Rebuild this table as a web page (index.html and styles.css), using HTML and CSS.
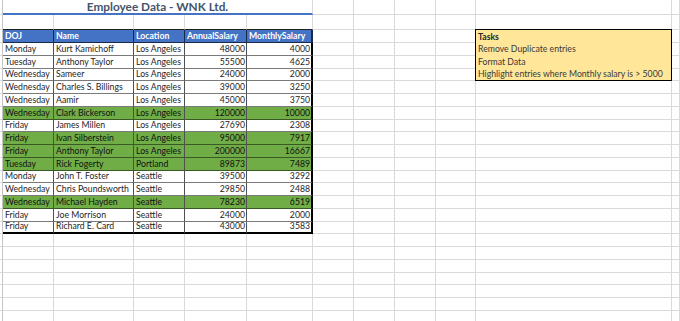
FILE: index.html
```html
<!DOCTYPE html>
<html>
<head>
<meta charset="utf-8">
<link rel="stylesheet" href="styles.css">
</head>
<body>
<div class="sheet">
  <div class="row">
    <div class="c g"></div><div class="c title">Employee Data - WNK Ltd.</div>
    <div class="c"></div><div class="c"></div><div class="c"></div><div class="c"></div><div class="c"></div><div class="c"></div>
  </div>
  <div class="row">
    <div class="c g"></div>
    <div class="c above"></div><div class="c above"></div><div class="c above"></div><div class="c above"></div><div class="c above"></div>
    <div class="c"></div><div class="c"></div><div class="c"></div><div class="c"></div><div class="c"></div><div class="c"></div>
  </div>
  <div class="row head">
    <div class="c g"></div>
    <div class="c t">DOJ</div><div class="c t">Name</div><div class="c t">Location</div><div class="c t">AnnualSalary</div><div class="c t e">MonthlySalary</div>
    <div class="c"></div><div class="c"></div><div class="c"></div><div class="c"></div>
    <div class="c tasks">
      <div class="line b">Tasks</div>
      <div class="line">Remove Duplicate entries</div>
      <div class="line">Format Data</div>
      <div class="line">Highlight entries where Monthly salary is &gt; 5000</div>
    </div>
    <div class="c"></div>
  </div>
  <div class="row">
    <div class="c g"></div>
    <div class="c t">Monday</div><div class="c t">Kurt Kamichoff</div><div class="c t">Los Angeles</div><div class="c t n">48000</div><div class="c t n e">4000</div>
    <div class="c"></div><div class="c"></div><div class="c"></div><div class="c"></div><div class="c"></div>
  </div>
  <div class="row">
    <div class="c g"></div>
    <div class="c t">Tuesday</div><div class="c t">Anthony Taylor</div><div class="c t">Los Angeles</div><div class="c t n">55500</div><div class="c t n e">4625</div>
    <div class="c"></div><div class="c"></div><div class="c"></div><div class="c"></div><div class="c"></div>
  </div>
  <div class="row">
    <div class="c g"></div>
    <div class="c t">Wednesday</div><div class="c t">Sameer</div><div class="c t">Los Angeles</div><div class="c t n">24000</div><div class="c t n e">2000</div>
    <div class="c"></div><div class="c"></div><div class="c"></div><div class="c"></div><div class="c"></div>
  </div>
  <div class="row">
    <div class="c g"></div>
    <div class="c t">Wednesday</div><div class="c t">Charles S. Billings</div><div class="c t">Los Angeles</div><div class="c t n">39000</div><div class="c t n e">3250</div>
    <div class="c"></div><div class="c"></div><div class="c"></div><div class="c"></div><div class="c"></div><div class="c"></div>
  </div>
  <div class="row">
    <div class="c g"></div>
    <div class="c t">Wednesday</div><div class="c t">Aamir</div><div class="c t">Los Angeles</div><div class="c t n">45000</div><div class="c t n e">3750</div>
    <div class="c"></div><div class="c"></div><div class="c"></div><div class="c"></div><div class="c"></div><div class="c"></div>
  </div>
  <div class="row hl">
    <div class="c g"></div>
    <div class="c t">Wednesday</div><div class="c t">Clark Bickerson</div><div class="c t">Los Angeles</div><div class="c t n">120000</div><div class="c t n e">10000</div>
    <div class="c"></div><div class="c"></div><div class="c"></div><div class="c"></div><div class="c"></div><div class="c"></div>
  </div>
  <div class="row">
    <div class="c g"></div>
    <div class="c t">Friday</div><div class="c t">James Millen</div><div class="c t">Los Angeles</div><div class="c t n">27690</div><div class="c t n e">2308</div>
    <div class="c"></div><div class="c"></div><div class="c"></div><div class="c"></div><div class="c"></div><div class="c"></div>
  </div>
  <div class="row hl">
    <div class="c g"></div>
    <div class="c t">Friday</div><div class="c t">Ivan Silberstein</div><div class="c t">Los Angeles</div><div class="c t n">95000</div><div class="c t n e">7917</div>
    <div class="c"></div><div class="c"></div><div class="c"></div><div class="c"></div><div class="c"></div><div class="c"></div>
  </div>
  <div class="row hl">
    <div class="c g"></div>
    <div class="c t">Friday</div><div class="c t">Anthony Taylor</div><div class="c t">Los Angeles</div><div class="c t n">200000</div><div class="c t n e">16667</div>
    <div class="c"></div><div class="c"></div><div class="c"></div><div class="c"></div><div class="c"></div><div class="c"></div>
  </div>
  <div class="row hl">
    <div class="c g"></div>
    <div class="c t">Tuesday</div><div class="c t">Rick Fogerty</div><div class="c t">Portland</div><div class="c t n">89873</div><div class="c t n e">7489</div>
    <div class="c"></div><div class="c"></div><div class="c"></div><div class="c"></div><div class="c"></div><div class="c"></div>
  </div>
  <div class="row">
    <div class="c g"></div>
    <div class="c t">Monday</div><div class="c t">John T. Foster</div><div class="c t">Seattle</div><div class="c t n">39500</div><div class="c t n e">3292</div>
    <div class="c"></div><div class="c"></div><div class="c"></div><div class="c"></div><div class="c"></div><div class="c"></div>
  </div>
  <div class="row">
    <div class="c g"></div>
    <div class="c t">Wednesday</div><div class="c t">Chris Poundsworth</div><div class="c t">Seattle</div><div class="c t n">29850</div><div class="c t n e">2488</div>
    <div class="c"></div><div class="c"></div><div class="c"></div><div class="c"></div><div class="c"></div><div class="c"></div>
  </div>
  <div class="row hl">
    <div class="c g"></div>
    <div class="c t">Wednesday</div><div class="c t">Michael Hayden</div><div class="c t">Seattle</div><div class="c t n">78230</div><div class="c t n e">6519</div>
    <div class="c"></div><div class="c"></div><div class="c"></div><div class="c"></div><div class="c"></div><div class="c"></div>
  </div>
  <div class="row">
    <div class="c g"></div>
    <div class="c t">Friday</div><div class="c t">Joe Morrison</div><div class="c t">Seattle</div><div class="c t n">24000</div><div class="c t n e">2000</div>
    <div class="c"></div><div class="c"></div><div class="c"></div><div class="c"></div><div class="c"></div><div class="c"></div>
  </div>
  <div class="row last">
    <div class="c g"></div>
    <div class="c t">Friday</div><div class="c t">Richard E. Card</div><div class="c t">Seattle</div><div class="c t n">43000</div><div class="c t n e">3583</div>
    <div class="c"></div><div class="c"></div><div class="c"></div><div class="c"></div><div class="c"></div><div class="c"></div>
  </div>
  <div class="row">
    <div class="c g"></div><div class="c"></div><div class="c"></div><div class="c"></div><div class="c"></div><div class="c"></div><div class="c"></div><div class="c"></div><div class="c"></div><div class="c"></div><div class="c"></div><div class="c"></div>
  </div>
  <div class="row">
    <div class="c g"></div><div class="c"></div><div class="c"></div><div class="c"></div><div class="c"></div><div class="c"></div><div class="c"></div><div class="c"></div><div class="c"></div><div class="c"></div><div class="c"></div><div class="c"></div>
  </div>
  <div class="row">
    <div class="c g"></div><div class="c"></div><div class="c"></div><div class="c"></div><div class="c"></div><div class="c"></div><div class="c"></div><div class="c"></div><div class="c"></div><div class="c"></div><div class="c"></div><div class="c"></div>
  </div>
  <div class="row">
    <div class="c g"></div><div class="c"></div><div class="c"></div><div class="c"></div><div class="c"></div><div class="c"></div><div class="c"></div><div class="c"></div><div class="c"></div><div class="c"></div><div class="c"></div><div class="c"></div>
  </div>
  <div class="row">
    <div class="c g"></div><div class="c"></div><div class="c"></div><div class="c"></div><div class="c"></div><div class="c"></div><div class="c"></div><div class="c"></div><div class="c"></div><div class="c"></div><div class="c"></div><div class="c"></div>
  </div>
  <div class="row">
    <div class="c g"></div><div class="c"></div><div class="c"></div><div class="c"></div><div class="c"></div><div class="c"></div><div class="c"></div><div class="c"></div><div class="c"></div><div class="c"></div><div class="c"></div><div class="c"></div>
  </div>
  <div class="row">
    <div class="c g"></div><div class="c"></div><div class="c"></div><div class="c"></div><div class="c"></div><div class="c"></div><div class="c"></div><div class="c"></div><div class="c"></div><div class="c"></div><div class="c"></div><div class="c"></div>
  </div>
</div>
</body>
</html>
```

FILE: styles.css
```css
html, body {
  margin: 0;
  padding: 0;
  background: #ffffff;
  overflow: hidden;
}

.sheet {
  display: grid;
  grid-template-columns: 3px 51px 80px 51px 62px 66px 41px 41px 41px 40px 196px 1fr;
  grid-template-rows: 15px 15px 13px repeat(22, 12.75px);
  width: 680px;
  font-family: "Lato", "Liberation Sans", sans-serif;
  font-size: 8.7px;
  color: #1e1e1e;
}

.row {
  display: contents;
}

.c {
  box-sizing: border-box;
  border-right: 1px solid #dadada;
  border-bottom: 1px solid #dadada;
  display: flex;
  align-items: flex-end;
  padding: 0 2px 1px 2px;
  line-height: 11px;
  white-space: nowrap;
  overflow: hidden;
  min-width: 0;
}

.g {
  border-right-color: #c4c4c4;
  padding: 0;
}

.title {
  grid-column: span 5;
  justify-content: center;
  border-right-color: #dadada;
  border-bottom: 2px solid #4472c4;
  font-size: 11.8px;
  font-weight: 700;
  color: #44546a;
  line-height: 13px;
  padding-bottom: 0;
}

.above {
  border-bottom-color: #202020;
}

.t {
  border-right-color: #505050;
  border-bottom-color: #7a7a7a;
}

.head .t {
  background: #4472c4;
  color: #ffffff;
  font-weight: 700;
  border-right-color: #1a2a4a;
  border-bottom-color: #1a2a4a;
}

.hl .t {
  background: #70ad47;
  color: #111111;
  border-bottom-color: #3a5a25;
}

.n {
  justify-content: flex-end;
  padding-right: 1px;
}

.e {
  border-right: 2px solid #000000;
}

.last .t {
  border-bottom: 2px solid #000000;
}

.tasks {
  grid-row: span 4;
  position: relative;
  z-index: 1;
  display: flex;
  flex-direction: column;
  align-items: stretch;
  justify-content: flex-start;
  padding: 0 2px;
  background: #ffe699;
  border-right: 1px solid #000000;
  border-bottom: 1px solid #000000;
  box-shadow: -1px 0 0 #000000, 0 -1px 0 #000000, -1px -1px 0 #000000;
  color: #3a3a3a;
}

.line {
  height: 12.75px;
  display: flex;
  align-items: flex-end;
  padding-bottom: 1px;
  box-sizing: border-box;
}

.line:first-child {
  height: 13px;
}

.b {
  font-weight: 700;
  color: #262626;
}
```
